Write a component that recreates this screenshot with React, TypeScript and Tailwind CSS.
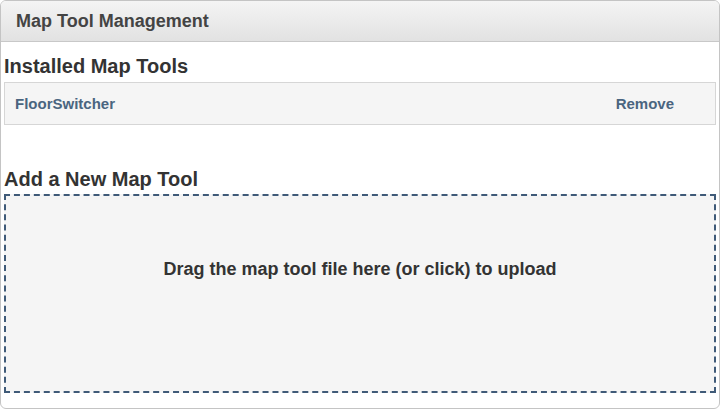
import React from 'react'

const tools = [{ name: 'FloorSwitcher' }]

export default function App() {
  return (
    <div className="w-[720px] h-[409px] bg-white font-['Liberation_Sans',Arial,sans-serif]">
      <div className="h-full flex flex-col border border-[#c4c4c4] rounded-[6px] overflow-hidden">
        <header className="h-[41px] shrink-0 flex items-center px-[15px] bg-gradient-to-b from-[#f4f4f4] to-[#e2e2e2] border-b border-[#c8c8c8]">
          <h1 className="text-[18px] font-bold text-[#444]">Map Tool Management</h1>
        </header>

        <div className="flex-1 flex flex-col px-[3px] pt-[12px] pb-[15px]">
          <h2 className="text-[20px] leading-[24px] font-bold text-[#333]">Installed Map Tools</h2>
          <ul className="mt-[4px]">
            {tools.map((tool) => (
              <li
                key={tool.name}
                className="h-[43px] flex items-center justify-between pl-[10px] pr-[41px] pt-[2px] bg-[#f5f5f5] border border-[#d6d6d6]"
              >
                <span className="text-[15px] font-bold text-[#4a6580]">{tool.name}</span>
                <button className="text-[15px] font-bold text-[#4a6580]">Remove</button>
              </li>
            ))}
          </ul>

          <h2 className="mt-[42px] text-[20px] leading-[24px] font-bold text-[#333]">Add a New Map Tool</h2>
          <div className="mt-[3px] flex-1 flex items-center justify-center border-2 border-dashed border-[#3f5a78] bg-[#f5f5f5] cursor-pointer">
            <p className="text-[18px] font-bold text-[#333] -mt-[49px]">
              Drag the map tool file here (or click) to upload
            </p>
          </div>
        </div>
      </div>
    </div>
  )
}
